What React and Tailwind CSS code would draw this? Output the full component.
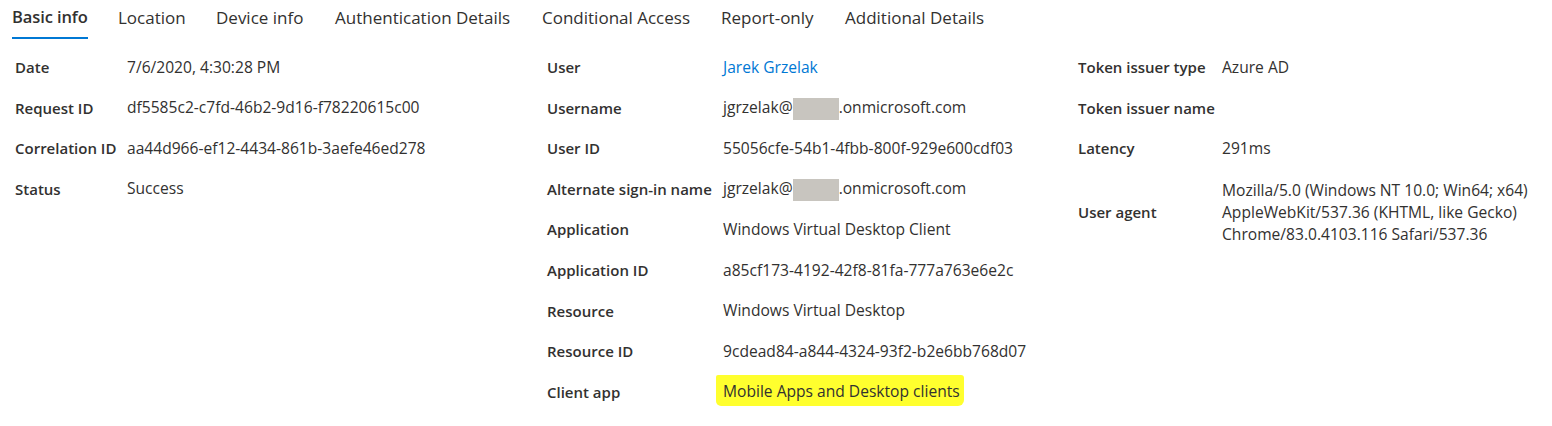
import React from "react";

const tabs = [
  { label: "Basic info", w: "w-[106px]", active: true },
  { label: "Location", w: "w-[98px]" },
  { label: "Device info", w: "w-[119px]" },
  { label: "Authentication Details", w: "w-[207px]" },
  { label: "Conditional Access", w: "w-[179px]" },
  { label: "Report-only", w: "w-[124px]" },
  { label: "Additional Details", w: "w-[160px]" },
];

const Hidden = () => (
  <span className="inline-block w-[46px] h-[22px] bg-[#c8c5bf] align-middle" />
);

const col1 = [
  ["Date", "7/6/2020, 4:30:28 PM"],
  ["Request ID", "df5585c2-c7fd-46b2-9d16-f78220615c00"],
  ["Correlation ID", "aa44d966-ef12-4434-861b-3aefe46ed278"],
  ["Status", "Success"],
];

const col2 = [
  ["User", <span className="text-[#0078d4]">Jarek Grzelak</span>],
  ["Username", <>jgrzelak@<Hidden />.onmicrosoft.com</>],
  ["User ID", "55056cfe-54b1-4fbb-800f-929e600cdf03"],
  ["Alternate sign-in name", <>jgrzelak@<Hidden />.onmicrosoft.com</>],
  ["Application", "Windows Virtual Desktop Client"],
  ["Application ID", "a85cf173-4192-42f8-81fa-777a763e6e2c"],
  ["Resource", "Windows Virtual Desktop"],
  ["Resource ID", "9cdead84-a844-4324-93f2-b2e6bb768d07"],
  [
    "Client app",
    <span className="bg-[#ffff2e] -ml-[7px] pl-[7px] pr-[4px] pt-[5px] pb-[4px] rounded-tl-[2px] rounded-br-[6px] rounded-tr-[3px] rounded-bl-[5px]">
      Mobile Apps and Desktop clients
    </span>,
  ],
];

function Column({ rows, labelW }) {
  return (
    <div className="flex flex-col">
      {rows.map(([k, v], i) => (
        <div key={i} className="flex items-center h-[40.6px]">
          <div className={`${labelW} shrink-0 font-semibold`}>{k}</div>
          <div className="whitespace-nowrap text-[15.6px]">{v}</div>
        </div>
      ))}
    </div>
  );
}

export default function App() {
  return (
    <div className="w-[1552px] h-[426px] bg-white text-[#323130] text-[15px] font-['Open_Sans',sans-serif]">
      <div className="flex h-[39px] pl-[12px]">
        {tabs.map((t) => (
          <div key={t.label} className={`${t.w} shrink-0 text-[17px]`}>
            <span
              className={`inline-block h-[39px] pt-[5px] border-b-2 ${
                t.active
                  ? "border-[#0078d4] font-semibold text-[16.5px] tracking-[-0.1px]"
                  : "border-transparent"
              }`}
            >
              {t.label}
            </span>
          </div>
        ))}
      </div>
      <div className="grid grid-cols-[532px_531px_1fr] pl-[15px] pt-[8px]">
        <Column rows={col1} labelW="w-[112px]" />
        <Column rows={col2} labelW="w-[176px]" />
        <div className="flex flex-col">
          {[
            ["Token issuer type", "Azure AD"],
            ["Token issuer name", ""],
            ["Latency", "291ms"],
          ].map(([k, v]) => (
            <div key={k} className="flex items-center h-[40.6px]">
              <div className="w-[144px] shrink-0 font-semibold">{k}</div>
              <div className="text-[15.6px]">{v}</div>
            </div>
          ))}
          <div className="flex items-center py-[10px]">
            <div className="w-[144px] shrink-0 font-semibold">User agent</div>
            <div className="leading-[22px] text-[15.6px]">
              <div>Mozilla/5.0 (Windows NT 10.0; Win64; x64)</div>
              <div>AppleWebKit/537.36 (KHTML, like Gecko)</div>
              <div>Chrome/83.0.4103.116 Safari/537.36</div>
            </div>
          </div>
        </div>
      </div>
    </div>
  );
}
